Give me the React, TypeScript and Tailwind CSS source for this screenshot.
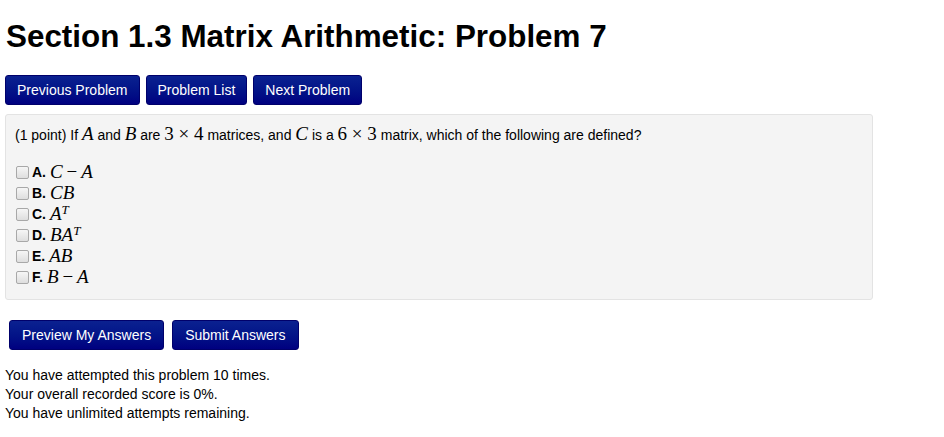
import React from 'react'

const sans = "font-['Liberation_Sans',Arial,sans-serif]"
const serif = "font-['Liberation_Serif','DejaVu_Serif',serif]"

function Btn({ children, wide }: { children: React.ReactNode; wide?: boolean }) {
  return (
    <button
      type="button"
      className={`h-[30px] rounded-[3px] border border-[#00006b] bg-gradient-to-b from-[#0b2190] to-[#000080] text-[14px] leading-none text-white ${wide ? 'px-[12px]' : 'px-[11px]'}`}
    >
      {children}
    </button>
  )
}

function M({ children }: { children: React.ReactNode }) {
  return <span className={`${serif} text-[19px] italic`}>{children}</span>
}

function N({ children }: { children: React.ReactNode }) {
  return <span className={`${serif} text-[19px]`}>{children}</span>
}

const sup = `${serif} text-[13px] italic`

const choices: [string, React.ReactNode][] = [
  ['A.', <><M>C</M> <N>−</N> <M>A</M></>],
  ['B.', <M>CB</M>],
  ['C.', <><M>A</M><sup className={sup}>T</sup></>],
  ['D.', <><M>BA</M><sup className={sup}>T</sup></>],
  ['E.', <M>AB</M>],
  ['F.', <><M>B</M> <N>−</N> <M>A</M></>],
]

export default function App() {
  return (
    <div className={`${sans} min-h-[437px] bg-white px-[5px] text-[14px] text-black`}>
      <h1 className="pt-[18px] pl-[1px] text-[31.4px] font-bold leading-[38px]">
        Section 1.3 Matrix Arithmetic: Problem 7
      </h1>
      <div className="mt-[19px] flex gap-[6px]">
        <Btn>Previous Problem</Btn>
        <Btn>Problem List</Btn>
        <Btn>Next Problem</Btn>
      </div>
      <div className="mt-[9px] h-[186px] w-[868px] rounded-[3px] border border-[#e3e3e3] bg-[#f4f4f4] px-[9px] pt-[8px]">
        <p className="leading-[22px]">
          (1 point) If <M>A</M> and <M>B</M> are <N>3 × 4</N> matrices, and <M>C</M> is a{' '}
          <N>6 × 3</N> matrix, which of the following are defined?
        </p>
        <div className="mt-[16px] flex flex-col">
          {choices.map(([label, expr]) => (
            <label key={label} className="flex h-[21px] items-center">
              <span className="ml-[1px] mr-[3px] inline-block h-[13px] w-[13px] rounded-[2px] border border-[#a8a8a8] bg-gradient-to-b from-[#f6f6f6] to-[#dedede]" />
              <b className="mr-[4px] text-[14px]">{label}</b>
              <span className="leading-[21px]">{expr}</span>
            </label>
          ))}
        </div>
      </div>
      <div className="mt-[20px] flex gap-[8px] pl-[4px]">
        <Btn wide>Preview My Answers</Btn>
        <Btn wide>Submit Answers</Btn>
      </div>
      <div className="mt-[16px] leading-[19px]">
        <p>You have attempted this problem 10 times.</p>
        <p>Your overall recorded score is 0%.</p>
        <p>You have unlimited attempts remaining.</p>
      </div>
    </div>
  )
}
